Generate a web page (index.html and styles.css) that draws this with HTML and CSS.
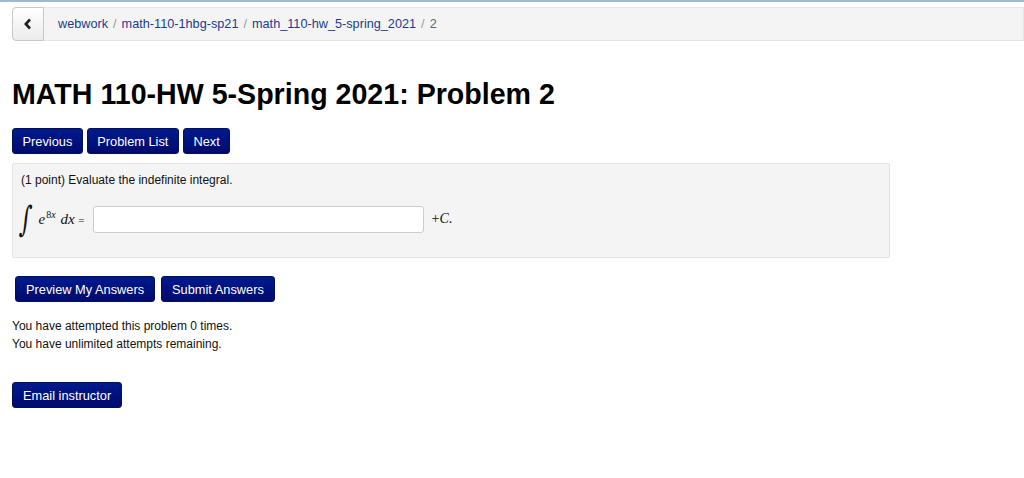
FILE: index.html
```html
<!DOCTYPE html>
<html>
<head>
<meta charset="utf-8">
<link rel="stylesheet" href="styles.css">
</head>
<body>
<div class="topline"></div>
<div class="page">
  <nav class="crumbs">
    <a class="back" href="#"><svg width="10" height="12" viewBox="0 0 10 12"><path d="M7 1.5 L2.8 6 L7 10.5" fill="none" stroke="#222" stroke-width="2.6" stroke-linejoin="miter"/></svg></a>
    <div class="trail">
      <a href="#">webwork</a><span class="sep">/</span><a href="#">math-110-1hbg-sp21</a><span class="sep">/</span><a href="#">math_110-hw_5-spring_2021</a><span class="sep">/</span><span class="cur">2</span>
    </div>
  </nav>
  <h1 class="title">MATH 110-HW 5-Spring 2021: Problem 2</h1>
  <div class="navbtns">
    <button class="btn">Previous</button>
    <button class="btn">Problem List</button>
    <button class="btn">Next</button>
  </div>
  <div class="problem">
    <p class="prompt">(1 point) Evaluate the indefinite integral.</p>
    <div class="eqrow">
      <span class="int">∫</span>
      <span class="expr"><i>e</i><sup class="exp">8<i>x</i></sup> <i>dx</i> <span class="eq">=</span></span>
      <input class="answer" type="text">
      <span class="plusc">+<i>C</i>.</span>
    </div>
  </div>
  <div class="submitbtns">
    <button class="btn">Preview My Answers</button>
    <button class="btn">Submit Answers</button>
  </div>
  <div class="attempts">
    <p>You have attempted this problem 0 times.</p>
    <p>You have unlimited attempts remaining.</p>
  </div>
  <button class="btn email">Email instructor</button>
</div>
</body>
</html>
```
FILE: styles.css
```css
* { box-sizing: border-box; }
html, body { margin: 0; padding: 0; background: #fff; }
body { font-family: "Liberation Sans", Arial, sans-serif; font-size: 12px; color: #111; }
.topline { height: 2px; background: #9fb6d6; }
.page { padding: 5px 0 0 12px; }
.crumbs { display: flex; height: 34px; }
.back {
  width: 32px; height: 34px; display: flex; align-items: center; justify-content: center;
  border: 1px solid #c8c8c8; border-radius: 4px 0 0 4px;
  background: linear-gradient(#ffffff, #ececec);
}
.trail {
  flex: 1; display: flex; align-items: center; padding-left: 14px;
  background: #f4f4f4; border: 1px solid #e4e4e4; border-left: none;
  font-size: 12.7px;
}
.trail a { color: #1b3b8c; text-decoration: none; }
.sep { color: #999; padding: 0 5px; }
.cur { color: #666; }
.title { font-size: 28.6px; font-weight: bold; margin: 37px 0 0 0; line-height: 32px; color: #000; }
.navbtns { display: flex; gap: 4px; margin-top: 18px; }
.btn {
  font-family: "Liberation Sans", Arial, sans-serif; font-size: 12.8px; color: #fff;
  height: 26px; padding: 0 10px; border: 1px solid #00105a; border-radius: 3px;
  background: linear-gradient(#001a8c, #000a6e);
}
.navbtns .btn { padding: 0 9.5px; }
.problem {
  width: 878px; height: 95px; margin-top: 9px;
  background: #f4f4f4; border: 1px solid #e3e3e3; border-radius: 2px;
  padding: 9px 8px;
}
.prompt { margin: 0; font-size: 12px; line-height: 15px; }
.eqrow { display: flex; align-items: center; margin-top: 15px; height: 32px; }
.int { font-family: "DejaVu Serif", serif; font-size: 26px; line-height: 32px; transform: scale(0.85, 1.35) skewX(-8deg); margin-left: -2px; margin-right: 6px; font-weight: normal; }
.expr { font-family: "Liberation Serif", "Times New Roman", serif; font-size: 15px; white-space: nowrap; padding-top: 1px; }
.exp { font-size: 10px; vertical-align: 6px; line-height: 0; margin-left: 1px; margin-right: 1px; }
.eq { font-size: 11px; }
.answer {
  width: 331px; height: 27px; margin-left: 8px;
  border: 1px solid #ccc; border-radius: 3px; background: #fff;
}
.plusc { font-family: "Liberation Serif", "Times New Roman", serif; font-size: 14px; margin-left: 8px; }
.submitbtns { display: flex; gap: 6px; margin-top: 18px; margin-left: 3px; }
.attempts { margin-top: 15px; line-height: 18px; }
.attempts p { margin: 0; }
.email { margin-top: 29px; }
```
